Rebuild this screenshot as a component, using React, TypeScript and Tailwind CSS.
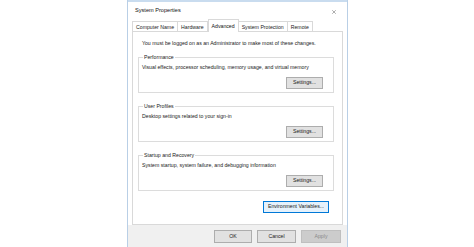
import { X } from 'lucide-react'

const font = "font-['Liberation_Sans','Noto_Sans',sans-serif]"

function Btn({ label, w, h = 'h-[12px]', focus, disabled }: { label: string; w: string; h?: string; focus?: boolean; disabled?: boolean }) {
  const base = 'flex items-center justify-center text-[5.2px] leading-none border'
  const look = focus
    ? 'bg-[#e5f1fb] border-[#0078d7] text-[#1a1a1a]'
    : disabled
      ? 'bg-[#cccccc] border-[#bfbfbf] text-[#8a8a8a]'
      : 'bg-[#e1e1e1] border-[#adadad] text-[#1a1a1a]'
  return <div className={`${base} ${look} ${w} ${h}`}>{label}</div>
}

function Group({ title, text }: { title: string; text: string }) {
  return (
    <div className="relative border border-[#dcdcdc] h-[36px] flex flex-col">
      <span className="absolute left-[4px] top-[-4px] bg-white px-[1px] text-[5.2px] leading-[7px] text-[#222]">
        {title}
      </span>
      <div className="pl-[3px] pt-[6px] text-[5.2px] leading-[7px] text-[#222]">{text}</div>
      <div className="mt-auto mb-[3px] mr-[10px] flex justify-end">
        <Btn label="Settings..." w="w-[37px]" />
      </div>
    </div>
  )
}

const tabs = ['Computer Name', 'Hardware', 'Advanced', 'System Protection', 'Remote']

export default function App() {
  return (
    <div className={`w-[474px] h-[247px] bg-white overflow-hidden ${font}`}>
      <div className="ml-[127px] w-[221px] h-[247px] flex flex-col border-x border-[#b9cfe6] bg-white">
        <div className="h-[2px] bg-[#c9dcef]" />
        {/* title bar */}
        <div className="h-[17px] flex items-center justify-between pl-[7px] pr-[10px]">
          <span className="text-[5.6px] text-[#111]">System Properties</span>
          <X className="w-[6px] h-[6px] text-[#333] mt-[3px]" strokeWidth={1.6} />
        </div>
        {/* tabs */}
        <div className="h-[12px] flex items-end pl-[4px]">
          {tabs.map(t => {
            const active = t === 'Advanced'
            return (
              <div
                key={t}
                className={
                  active
                    ? 'h-[13px] mb-[-1px] px-[3px] bg-white border border-b-0 border-[#d9d9d9] text-[5.2px] leading-[12px] text-[#111] relative z-10'
                    : 'h-[10px] px-[3px] border border-b-0 border-[#d9d9d9] ml-[-1px] first:ml-0 text-[5.2px] leading-[10px] text-[#222] bg-white'
                }
              >
                {t}
              </div>
            )
          })}
        </div>
        {/* panel */}
        <div className="mx-[4px] h-[194px] border border-[#d9d9d9] bg-white flex flex-col pl-[5px] pr-[8px]">
          <div className="pl-[4px] pt-[8px] text-[5.2px] leading-[7px] text-[#222]">
            You must be logged on as an Administrator to make most of these changes.
          </div>
          <div className="mt-[10px] flex flex-col gap-[13px]">
            <Group title="Performance" text="Visual effects, processor scheduling, memory usage, and virtual memory" />
            <Group title="User Profiles" text="Desktop settings related to your sign-in" />
            <Group title="Startup and Recovery" text="System startup, system failure, and debugging information" />
          </div>
          <div className="mt-[10px] flex justify-end pr-[5px]">
            <Btn label="Environment Variables..." w="w-[66px]" focus />
          </div>
        </div>
        {/* footer */}
        <div className="flex-1 bg-[#f0f0f0] flex items-start justify-end gap-[5px] pr-[6px] pt-[5px]">
          <Btn label="OK" w="w-[38px]" h="h-[13px]" />
          <Btn label="Cancel" w="w-[39px]" h="h-[13px]" />
          <Btn label="Apply" w="w-[40px]" h="h-[13px]" disabled />
        </div>
      </div>
    </div>
  )
}
